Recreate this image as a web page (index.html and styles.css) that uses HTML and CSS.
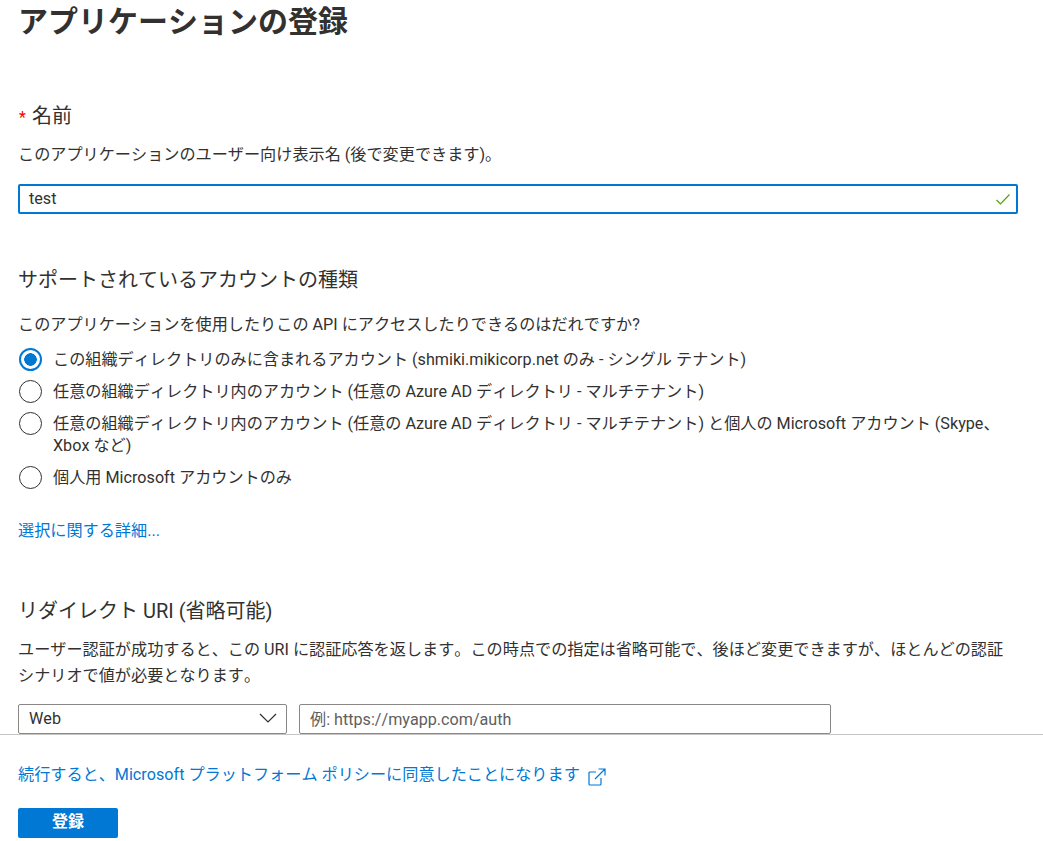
FILE: index.html
```html
<!DOCTYPE html>
<html lang="ja">
<head>
    <meta charset="UTF-8" />
    <meta name="viewport" content="width=device-width, initial-scale=1.0" />
    <title>アプリケーションの登録</title>
    <link rel="stylesheet" href="styles.css">
</head>
<body>

<div class="page">
    <div class="content">
        <h1>アプリケーションの登録</h1>

        <h2 class="name-label"><span class="required">*</span>名前</h2>
        <p class="desc name-desc">このアプリケーションのユーザー向け表示名 (後で変更できます)。</p>
        <div class="name-field">
            <span>test</span>
            <svg class="check" width="14" height="11" viewBox="0 0 14 11"><path d="M0.5 6 L4.5 10 L13.5 0.5" fill="none" stroke="#57a300" stroke-width="1.2"/></svg>
        </div>

        <h2 class="section-title account-title">サポートされているアカウントの種類</h2>
        <p class="desc account-desc">このアプリケーションを使用したりこの API にアクセスしたりできるのはだれですか?</p>

        <div class="radio-list">
            <div class="radio-item"><span class="radio checked"></span><span class="radio-text">この組織ディレクトリのみに含まれるアカウント (shmiki.mikicorp.net のみ - シングル テナント)</span></div>
            <div class="radio-item"><span class="radio"></span><span class="radio-text">任意の組織ディレクトリ内のアカウント (任意の Azure AD ディレクトリ - マルチテナント)</span></div>
            <div class="radio-item"><span class="radio"></span><span class="radio-text">任意の組織ディレクトリ内のアカウント (任意の Azure AD ディレクトリ - マルチテナント) と個人の Microsoft アカウント (Skype、Xbox など)</span></div>
            <div class="radio-item"><span class="radio"></span><span class="radio-text">個人用 Microsoft アカウントのみ</span></div>
        </div>

        <a class="link more-link" href="#">選択に関する詳細...</a>

        <h2 class="section-title redirect-title">リダイレクト URI (省略可能)</h2>
        <p class="desc redirect-desc">ユーザー認証が成功すると、この URI に認証応答を返します。この時点での指定は省略可能で、後ほど変更できますが、ほとんどの認証シナリオで値が必要となります。</p>

        <div class="redirect-row">
            <div class="select">
                <span>Web</span>
                <svg width="18" height="10" viewBox="0 0 18 10"><path d="M1 1 L9 9 L17 1" fill="none" stroke="#323130" stroke-width="1.2"/></svg>
            </div>
            <div class="uri-input">例: https://myapp.com/auth</div>
        </div>
    </div>

    <div class="footer">
        <a class="link policy-link" href="#">続行すると、Microsoft プラットフォーム ポリシーに同意したことになります
            <svg width="18" height="18" viewBox="0 0 18 18"><path d="M8 4 H2 Q1 4 1 5 V16 Q1 17 2 17 H12 Q13 17 13 16 V10 M7 11 L17 1 M10.5 1 H17 V7.5" fill="none" stroke="#0078d4" stroke-width="1.2"/></svg>
        </a>
        <button class="register-btn">登録</button>
    </div>
</div>

</body>
</html>
```

FILE: styles.css
```css
body {
    margin: 0;
    background-color: #fff;
    color: #323130;
    font-family: Roboto, "Noto Sans CJK JP", sans-serif;
    font-size: 16.15px;
    font-kerning: none;
}

.page {
    height: 841px;
    display: flex;
    flex-direction: column;
    overflow: hidden;
}

.content {
    height: 734px;
    padding: 0 18px;
    box-sizing: border-box;
    overflow: hidden;
    flex-shrink: 0;
}

h1 {
    margin: 0;
    font-size: 30px;
    font-weight: 700;
    line-height: 44px;
}

h2 {
    margin: 0;
    font-size: 20px;
    font-weight: 400;
    line-height: 28px;
}

.desc {
    margin: 0;
    line-height: 24px;
}

.name-label {
    margin-top: 58px;
}

.required {
    color: #f00;
    font-size: 16px;
    margin: 0 6px 0 1px;
}

.name-desc {
    margin-top: 11px;
}

/* campo de nombre */
.name-field {
    margin-top: 17px;
    width: 1000px;
    height: 30px;
    box-sizing: border-box;
    border: 2px solid #0078d4;
    border-radius: 2px;
    padding: 0 6px 0 9px;
    display: flex;
    align-items: center;
    justify-content: space-between;
    line-height: 24px;
}

.account-title {
    margin-top: 52px;
}

.account-desc {
    margin-top: 19px;
}

.radio-list {
    margin-top: 11px;
    display: flex;
    flex-direction: column;
    gap: 9px;
}

.radio-item {
    display: flex;
    gap: 11px;
    padding-left: 1px;
}

.radio-text {
    padding-top: 1px;
    line-height: 22px;
}

.radio {
    width: 23px;
    height: 23px;
    flex-shrink: 0;
    box-sizing: border-box;
    border: 1px solid #323130;
    border-radius: 50%;
}

.radio.checked {
    border: 2px solid #0078d4;
    background: radial-gradient(circle, #0078d4 0 6px, #fff 6.5px);
}

.link {
    color: #0078d4;
    text-decoration: none;
}

.more-link {
    display: block;
    margin-top: 30px;
    line-height: 24px;
}

.redirect-title {
    margin-top: 54px;
}

.redirect-desc {
    margin-top: 12px;
    line-height: 26px;
    max-width: 995px;
}

.redirect-row {
    margin-top: 15px;
    display: flex;
    gap: 12px;
}

.select, .uri-input {
    height: 30px;
    box-sizing: border-box;
    border: 1px solid #8a8886;
    border-radius: 2px;
    display: flex;
    align-items: center;
    padding: 0 10px 2px;
}

.select {
    width: 269px;
    justify-content: space-between;
    padding-right: 9px;
}

.uri-input {
    width: 532px;
    color: #605e5c;
}

/* pie de pagina */
.footer {
    border-top: 1px solid #c8c6c4;
    padding: 28px 18px 0;
}

.policy-link {
    display: flex;
    align-items: center;
    gap: 8px;
    line-height: 24px;
    white-space: nowrap;
}

.policy-link svg {
    margin-top: 3px;
}

.register-btn {
    display: block;
    margin-top: 21px;
    width: 100px;
    height: 30px;
    border: none;
    border-radius: 2px;
    background-color: #0078d4;
    color: #fff;
    font-family: inherit;
    font-size: 16px;
    font-weight: 700;
    padding: 0 0 7px;
}
```
